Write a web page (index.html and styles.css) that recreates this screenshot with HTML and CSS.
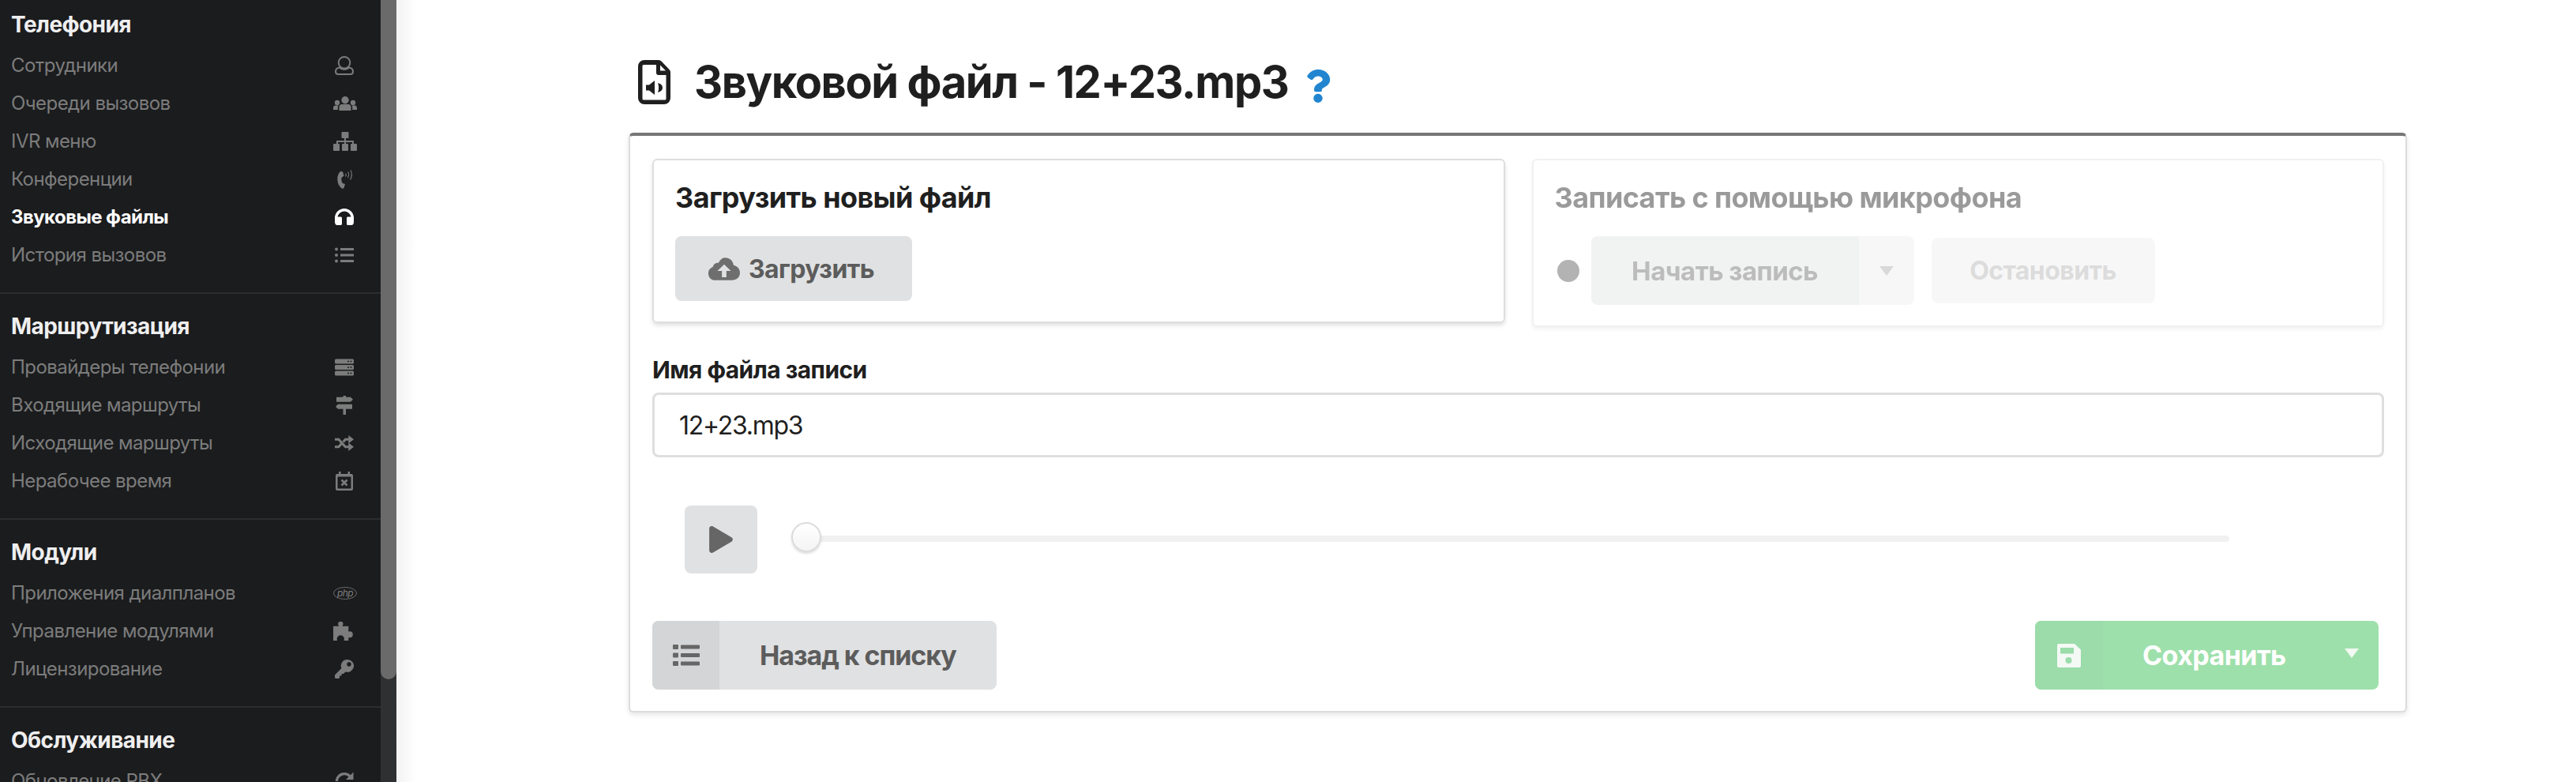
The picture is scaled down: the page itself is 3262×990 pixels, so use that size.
FILE: index.html
```html
<!DOCTYPE html>
<html lang="ru">
<head>
    <meta charset="UTF-8">
    <meta name="viewport" content="width=device-width, initial-scale=1.0">
    <title>Звуковой файл - 12+23.mp3</title>
    <link rel="stylesheet" href="styles.css">
</head>
<body>
    <div class="app">
        <aside class="sidebar">
            <nav class="menu">
                <section class="menu-section first">
                    <h3 class="menu-title">Телефония</h3>
                    <a class="menu-item"><span>Сотрудники</span>
                        <svg class="menu-icon" viewBox="0 0 24 24"><circle cx="12" cy="8.300" r="7.300" fill="none" stroke="currentColor" stroke-width="2"/><path d="M6 14.500C3 15 1 17.200 1 19.500 1 21.700 2.500 23 4.500 23h15c2 0 3.500-1.300 3.500-3.500 0-2.300-2-4.500-5-5-1.500 1.500-3.500 2.500-6 2.500s-4.500-1-6-2.500z" fill="none" stroke="currentColor" stroke-width="2"/></svg></a>
                    <a class="menu-item"><span>Очереди вызовов</span>
                        <svg class="menu-icon wide" viewBox="0 0 30 18"><circle cx="15" cy="4.700" r="4.700"/><circle cx="5" cy="8" r="3.200"/><circle cx="25" cy="8" r="3.200"/><path d="M7.500 18v-4.500c0-2 1.500-3.500 3.500-3.500h8c2 0 3.500 1.500 3.500 3.500V18zM0 17v-2.500c0-1.500 1-3 2.500-3h4c-.5.700-.7 1.500-.7 2.500v3zM30 17v-2.500c0-1.500-1-3-2.500-3h-4c.5.700.7 1.500.7 2.500v3z"/></svg></a>
                    <a class="menu-item"><span>IVR меню</span>
                        <svg class="menu-icon wide" viewBox="0 0 30 24"><rect x="10.500" width="9" height="8" rx="1"/><rect y="15" width="8" height="9" rx="1"/><rect x="11" y="15" width="8" height="9" rx="1"/><rect x="22" y="15" width="8" height="9" rx="1"/><path d="M14 8h2v3h10v4h-2v-2h-8v2h-2v-2H6v2H4v-4h10z"/></svg></a>
                    <a class="menu-item"><span>Конференции</span>
                        <svg class="menu-icon" viewBox="0 0 24 24"><path d="M10 2.500 11.500 7.500 8.500 10C8 12.500 8.500 15 9.800 17L13 18 11.500 23C10.500 24 9 24 7.500 22.500 3 18 1.500 9 6 3 7 2 9 1.500 10 2.500z"/><path d="M13.500 4.500q1.500 2 0 4M16.500 2.500q2.500 4-.3 7.500M20 .5q3 6-.5 12" fill="none" stroke="currentColor" stroke-width="1.100"/></svg></a>
                    <a class="menu-item active"><span>Звуковые файлы</span>
                        <svg class="menu-icon" viewBox="0 0 24 22"><path d="M12 0A12 12 0 0 0 0 12V17C0 19 1 21 3 21H7C8.500 21 9 20.500 9 19V12.500C9 11 8.500 10.500 7 10.500H3.500C4.500 6.500 8 3.500 12 3.500S19.500 6.500 20.500 10.500H17C15.500 10.500 15 11 15 12.500V19C15 20.500 15.500 21 17 21H21C23 21 24 19 24 17V12A12 12 0 0 0 12 0z"/></svg></a>
                    <a class="menu-item"><span>История вызовов</span>
                        <svg class="menu-icon" viewBox="0 0 24 20"><circle cx="2" cy="2.500" r="2"/><circle cx="2" cy="10" r="2"/><circle cx="2" cy="17.500" r="2"/><rect x="7" y="1" width="17" height="3"/><rect x="7" y="8.500" width="17" height="3"/><rect x="7" y="16" width="17" height="3"/></svg></a>
                </section>
                <section class="menu-section">
                    <h3 class="menu-title">Маршрутизация</h3>
                    <a class="menu-item"><span>Провайдеры телефонии</span>
                        <svg class="menu-icon" viewBox="0 0 24 21"><path fill-rule="evenodd" d="M1.500 0h21A1.500 1.500 0 0 1 24 1.500v3A1.500 1.500 0 0 1 22.500 6h-21A1.500 1.500 0 0 1 0 4.500v-3A1.500 1.500 0 0 1 1.500 0zM16 2.300v1.500h2V2.300zm3.500 0v1.500h2V2.300zM1.500 7.500h21A1.500 1.500 0 0 1 24 9v3a1.500 1.500 0 0 1-1.500 1.500h-21A1.500 1.500 0 0 1 0 12V9a1.500 1.500 0 0 1 1.500-1.500zM16 9.800v1.500h2V9.800zm3.500 0v1.500h2V9.800zM1.500 15h21a1.500 1.500 0 0 1 1.500 1.500v3a1.500 1.500 0 0 1-1.500 1.500h-21A1.500 1.500 0 0 1 0 19.500v-3A1.500 1.500 0 0 1 1.500 15zM16 17.300v1.500h2v-1.500zm3.500 0v1.500h2v-1.500z"/></svg></a>
                    <a class="menu-item"><span>Входящие маршруты</span>
                        <svg class="menu-icon" viewBox="0 0 24 24"><path d="M10.500 0h3.500v1.700H20l3 3-3 3H2.500a.5.5 0 0 1-.5-.5V2.200a.5.5 0 0 1 .5-.5h8zM4 10.700h17.500a.5.5 0 0 1 .5.500v5a.5.5 0 0 1-.5.500H14V24h-3.500v-7.300H4l-3-3z"/></svg></a>
                    <a class="menu-item"><span>Исходящие маршруты</span>
                        <svg class="menu-icon" viewBox="0 0 25 21"><path d="M0 5.500h5l9 10h5M0 15.500h5l3.500-4M11 9l3-3.500h5" fill="none" stroke="currentColor" stroke-width="3.200"/><path d="M18 0l7 5.500L18 11zM18 10l7 5.500L18 21z"/></svg></a>
                    <a class="menu-item"><span>Нерабочее время</span>
                        <svg class="menu-icon" viewBox="0 0 22 24"><path fill-rule="evenodd" d="M4 0h2.500v3h9V0H18v3h2a2 2 0 0 1 2 2v17a2 2 0 0 1-2 2H2a2 2 0 0 1-2-2V5a2 2 0 0 1 2-2h2zM2.500 6.500v15h17v-15z"/><path d="M7.500 10.500 14.500 17.500M14.500 10.500 7.500 17.500" stroke="currentColor" stroke-width="2.600"/></svg></a>
                </section>
                <section class="menu-section">
                    <h3 class="menu-title">Модули</h3>
                    <a class="menu-item"><span>Приложения диалпланов</span>
                        <svg class="menu-icon wide" viewBox="0 0 30 16"><ellipse cx="15" cy="8" rx="14.500" ry="7.500" fill="none" stroke="currentColor" stroke-width=".8"/><text class="php-text" x="15" y="11.500" text-anchor="middle">php</text></svg></a>
                    <a class="menu-item"><span>Управление модулями</span>
                        <svg class="menu-icon wide" viewBox="0 0 27 24" preserveAspectRatio="xMinYMid"><path d="M0 5.700H6.500c.8 0 .3-.7-.2-1.700a3.200 3.200 0 1 1 6 0c-.5 1-1 1.700-.2 1.700H19.300V12c0 1 .7.800 1.500.3a3.200 3.200 0 1 1 0 8c-.8-.5-1.500-.7-1.500.3V24H14c-.8 0-.5-1 0-2a4.700 4.700 0 1 0-9.400 0c.5 1 .8 2 0 2H0z"/></svg></a>
                    <a class="menu-item"><span>Лицензирование</span>
                        <svg class="menu-icon" viewBox="0 0 24 24"><path fill-rule="evenodd" d="M16 0a8 8 0 1 1-2.500 15.600L11 18H8.500v2.500H6V23l-1 1H1l-1-1v-3.500l8.400-8.400A8 8 0 0 1 16 0zm2 3.300a2.700 2.700 0 1 0 0 5.400 2.700 2.700 0 0 0 0-5.400z"/></svg></a>
                </section>
                <section class="menu-section">
                    <h3 class="menu-title">Обслуживание</h3>
                    <a class="menu-item"><span>Обновление PBX</span>
                        <svg class="menu-icon" viewBox="0 0 24 24"><path d="M12 1a11 11 0 0 1 7.800 3.200L23.500 .5V10h-9.500l3.500-3.500A8 8 0 0 0 4 12H.8A11 11 0 0 1 12 1zM3 14h3a7 7 0 0 0 12 3l2.500 2.500A11 11 0 0 1 3 14z"/></svg></a>
                </section>
            </nav>
            <div class="scrollbar"><div class="scrollbar-thumb"></div></div>
        </aside>

        <main class="content">
            <h1 class="page-title">
                <svg class="title-icon" viewBox="0 0 41 56"><path fill-rule="evenodd" d="M8 0H26a5 5 0 0 1 3.500 1.500L39.500 12a5 5 0 0 1 1.500 3.500V48a8 8 0 0 1-8 8H8a8 8 0 0 1-8-8V8a8 8 0 0 1 8-8zM7 6a1.500 1.500 0 0 0-1.500 1.500V49A1.500 1.500 0 0 0 7 50.500H34A1.500 1.500 0 0 0 35.500 49V19H26a3 3 0 0 1-3-3V6zM28 6.500V13.500H35z"/><path d="M21 26V44L14 38.500H10V31.500H14zM25 29c4 1 6 3 6 6s-2 5-6 6c1.500-4 1.500-8 0-12z"/></svg>
                <span>Звуковой файл - 12+23.mp3</span>
                <svg class="help-icon" viewBox="0 0 384 512"><path d="M202.021 0C122.202 0 70.503 32.703 29.914 91.026c-7.363 10.58-5.093 25.086 5.178 32.874l43.138 32.709c10.373 7.865 25.132 6.026 33.253-4.148 25.049-31.381 43.63-49.449 82.757-49.449 30.764 0 68.816 19.799 68.816 49.631 0 22.552-18.617 34.134-48.993 51.164-35.423 19.86-82.299 44.576-82.299 106.405V320c0 13.255 10.745 24 24 24h72.471c13.255 0 24-10.745 24-24v-5.773c0-42.86 125.268-44.645 125.268-160.627C377.504 66.256 286.902 0 202.021 0zM192 373.459c-38.196 0-69.271 31.075-69.271 69.271 0 38.195 31.075 69.27 69.271 69.27s69.271-31.075 69.271-69.271-31.075-69.27-69.271-69.27z"/></svg>
            </h1>

            <form class="card">
                <div class="source-row">
                    <div class="source-box">
                        <h4 class="source-title">Загрузить новый файл</h4>
                        <button type="button" class="btn upload-btn">
                            <svg class="upload-icon" viewBox="0 0 42 30"><path fill-rule="evenodd" d="M22 0c6 0 11 4 11.500 10C38.500 11 42 15 42 20c0 6-4.500 10-11 10H9c-5 0-9-3.500-9-9 0-4 2.500-7.500 6-8.500C6.500 9 10 6.500 13.500 7 15.300 3 18.500 0 22 0zM21 9l-9 8.500h6V26h6v-8.500h6z"/></svg>
                            <span>Загрузить</span>
                        </button>
                    </div>
                    <div class="source-box disabled">
                        <h4 class="source-title">Записать с помощью микрофона</h4>
                        <div class="record-row">
                            <span class="record-dot"></span>
                            <div class="record-split">
                                <button type="button" class="btn record-btn">Начать запись</button>
                                <button type="button" class="btn record-caret"><svg class="caret" viewBox="0 0 18 12"><path d="M0 0h18l-9 12z"/></svg></button>
                            </div>
                            <button type="button" class="btn stop-btn">Остановить</button>
                        </div>
                    </div>
                </div>

                <label class="field-label" for="name">Имя файла записи</label>
                <input id="name" class="field-input" type="text" value="12+23.mp3">

                <div class="player">
                    <button type="button" class="btn play-btn"><svg class="play-icon" viewBox="0 0 448 512"><path d="M424.4 214.7L72.4 6.6C43.8-10.3 0 6.1 0 47.9V464c0 37.5 40.7 60.1 72.4 41.3l352-208c31.4-18.5 31.5-64.1 0-82.6z"/></svg></button>
                    <div class="slider">
                        <div class="slider-track"></div>
                        <div class="slider-thumb"></div>
                    </div>
                </div>

                <div class="actions">
                    <button type="button" class="btn labeled back-btn">
                        <span class="btn-side"><svg class="list-icon" viewBox="0 0 34 27"><rect width="7" height="6" rx="1"/><rect y="10.500" width="7" height="6" rx="1"/><rect y="21" width="7" height="6" rx="1"/><rect x="10" y=".5" width="24" height="5" rx="1"/><rect x="10" y="11" width="24" height="5" rx="1"/><rect x="10" y="21.500" width="24" height="5" rx="1"/></svg></span>
                        <span class="btn-text">Назад к списку</span>
                    </button>
                    <button type="button" class="btn labeled save-btn">
                        <span class="btn-side"><svg class="save-icon" viewBox="0 0 30 30"><path fill-rule="evenodd" d="M2 0h20l8 7.500V28a2 2 0 0 1-2 2H2a2 2 0 0 1-2-2V2a2 2 0 0 1 2-2zm2 5v7.500h17V5zm10.500 12a4 4 0 1 0 0 8 4 4 0 0 0 0-8z"/></svg></span>
                        <span class="btn-text">Сохранить</span>
                        <svg class="caret save-caret" viewBox="0 0 18 12"><path d="M0 0h18l-9 12z"/></svg>
                    </button>
                </div>
            </form>
        </main>
    </div>
</body>
</html>
```

FILE: styles.css
```css
/* page */
html, body {
    height: 100%;
}

body {
    margin: 0;
    font-family: Inter, "Liberation Sans", Arial, sans-serif;
    letter-spacing: -0.56px;
    color: #1f1f1f;
    background-color: #fff;
    overflow: hidden;
}

.app {
    display: flex;
    height: 990px;
    overflow: hidden;
}

/* sidebar */
.sidebar {
    display: flex;
    flex: 0 0 502px;
    height: 990px;
    overflow: hidden;
    background-color: #1b1c1e;
}

.menu {
    flex: 0 0 482px;
}

.menu-section {
    padding: 24px 0 23px;
    border-bottom: 2px solid #2c2d2f;
}

.menu-section.first {
    padding-top: 14px;
}

.menu-title {
    margin: 0 0 11px;
    padding: 0 14px;
    font-size: 28px;
    line-height: 34px;
    font-weight: bold;
    color: #efefef;
}

.menu-item {
    display: flex;
    align-items: center;
    justify-content: space-between;
    height: 48px;
    padding: 0 30px 0 14px;
    font-size: 24px;
    color: #7c7c7c;
}

.menu-item span {
    margin-top: -2px;
}

.menu-item.active {
    font-weight: bold;
    color: #fff;
}

.menu-icon {
    width: 24px;
    height: 24px;
    margin-right: 4px;
    fill: currentColor;
}

.menu-icon.wide {
    width: 30px;
    margin-right: 0;
}

.php-text {
    font-size: 12px;
    font-style: italic;
}

.scrollbar {
    flex: 0 0 20px;
    background-color: #2f3032;
}

.scrollbar-thumb {
    height: 860px;
    background-color: #6a6a6a;
    border-radius: 0 0 10px 10px;
}

/* main area */
.content {
    flex: 1;
    padding: 76px 214px 0 294px;
    background-image: linear-gradient(90deg, #f3f3f3, #fff 26px);
}

.page-title {
    display: flex;
    align-items: center;
    height: 56px;
    margin: 0 0 36px;
    padding-left: 12px;
    font-size: 56px;
    font-weight: bold;
    letter-spacing: -0.026em;
    color: #1f1f1f;
}

.title-icon {
    width: 41px;
    height: 56px;
    margin-right: 30px;
    fill: #1f1f1f;
}

.help-icon {
    width: 32px;
    height: 42px;
    margin: 10px 0 0 21px;
    fill: #2185d0;
}

.card {
    height: 734px;
    box-sizing: border-box;
    padding: 29px 27px 27px 28px;
    background-color: #fff;
    border: 2px solid #dcdcdc;
    border-top: 4px solid #767676;
    border-radius: 6px;
    box-shadow: 0 3px 6px rgba(0, 0, 0, 0.1);
}

.source-row {
    display: flex;
    align-items: flex-start;
    gap: 34px;
}

.source-box {
    flex: 1;
    padding: 27px 27px 26px;
    border: 2px solid #dedede;
    border-radius: 6px;
    box-shadow: 0 3px 5px rgba(0, 0, 0, 0.12);
}

.source-box.disabled {
    opacity: 0.45;
}

.source-title {
    margin: 0 0 29px;
    font-size: 36px;
    line-height: 40px;
    font-weight: bold;
    letter-spacing: -0.017em;
    color: #1f1f1f;
}

/* buttons */
.btn {
    display: inline-flex;
    align-items: center;
    justify-content: center;
    padding: 0;
    border: none;
    border-radius: 8px;
    font-family: inherit;
    font-size: 32px;
    font-weight: bold;
    letter-spacing: inherit;
    color: #5c5c5c;
    background-color: #e0e1e2;
}

.upload-btn {
    gap: 11px;
    width: 300px;
    height: 82px;
    padding-right: 6px;
}

.upload-icon {
    width: 40px;
    height: 29px;
    fill: #6e6e6e;
}

.record-row {
    display: flex;
    align-items: center;
}

.record-dot {
    width: 28px;
    height: 28px;
    margin: 0 15px 0 3px;
    border-radius: 50%;
    background-color: #555;
}

.record-split {
    display: flex;
    margin-right: 22px;
}

.record-btn {
    width: 339px;
    height: 87px;
    border-radius: 8px 0 0 8px;
    font-size: 33px;
    color: #6a6a6a;
}

.record-caret {
    width: 70px;
    height: 87px;
    border-radius: 0 8px 8px 0;
    background-color: #eee;
}

.stop-btn {
    width: 283px;
    height: 83px;
    color: #b0b0b0;
    background-color: #eee;
}

.caret {
    width: 18px;
    height: 12px;
    fill: #aaa;
}

/* form fields */
.field-label {
    display: block;
    margin: 36px 0 11px;
    font-size: 30px;
    line-height: 36px;
    font-weight: bold;
    color: #1f1f1f;
}

.field-input {
    display: block;
    width: 100%;
    height: 82px;
    box-sizing: border-box;
    padding: 0 31px;
    border: 3px solid #dedede;
    border-radius: 8px;
    font-family: inherit;
    font-size: 32px;
    letter-spacing: -0.04em;
    color: #1f1f1f;
    background-color: #fff;
}

/* audio player */
.player {
    display: flex;
    align-items: center;
    gap: 43px;
    margin-top: 61px;
    padding: 0 196px 0 41px;
}

.play-btn {
    flex: 0 0 92px;
    height: 86px;
}

.play-icon {
    width: 30px;
    height: 34px;
    fill: #666;
}

.slider {
    position: relative;
    flex: 1;
    height: 38px;
    margin-top: -6px;
}

.slider-track {
    height: 8px;
    margin: 17px 0 0 19px;
    border-radius: 4px;
    background-color: #f1f1f1;
}

.slider-thumb {
    position: absolute;
    top: 0;
    left: 0;
    width: 38px;
    height: 38px;
    box-sizing: border-box;
    border: 2px solid #dcdcdc;
    border-radius: 50%;
    background-image: linear-gradient(#fff, #f4f4f4);
    box-shadow: 0 2px 3px rgba(0, 0, 0, 0.14);
}

/* bottom buttons */
.actions {
    display: flex;
    justify-content: space-between;
    margin: 60px 7px 0 0;
}

.labeled {
    justify-content: flex-start;
    height: 87px;
    overflow: hidden;
    font-size: 34px;
}

.btn-side {
    display: flex;
    align-items: center;
    justify-content: center;
    flex: 0 0 auto;
    height: 100%;
}

.back-btn {
    width: 436px;
    letter-spacing: -0.032em;
}

.back-btn .btn-side {
    width: 85px;
    background-color: #d4d5d6;
}

.back-btn .btn-text {
    margin-left: 51px;
}

.list-icon {
    width: 34px;
    height: 27px;
    fill: #666;
}

.save-btn {
    width: 435px;
    color: #fff;
    background-color: #9ee0ab;
}

.save-btn .btn-side {
    width: 86px;
    background-color: #9bdcaa;
}

.save-btn .btn-text {
    margin-left: 50px;
}

.save-icon {
    width: 30px;
    height: 30px;
    fill: #f4f9f5;
}

.save-caret {
    margin-left: 74px;
    margin-top: -6px;
    fill: #f1f9f2;
}
```
